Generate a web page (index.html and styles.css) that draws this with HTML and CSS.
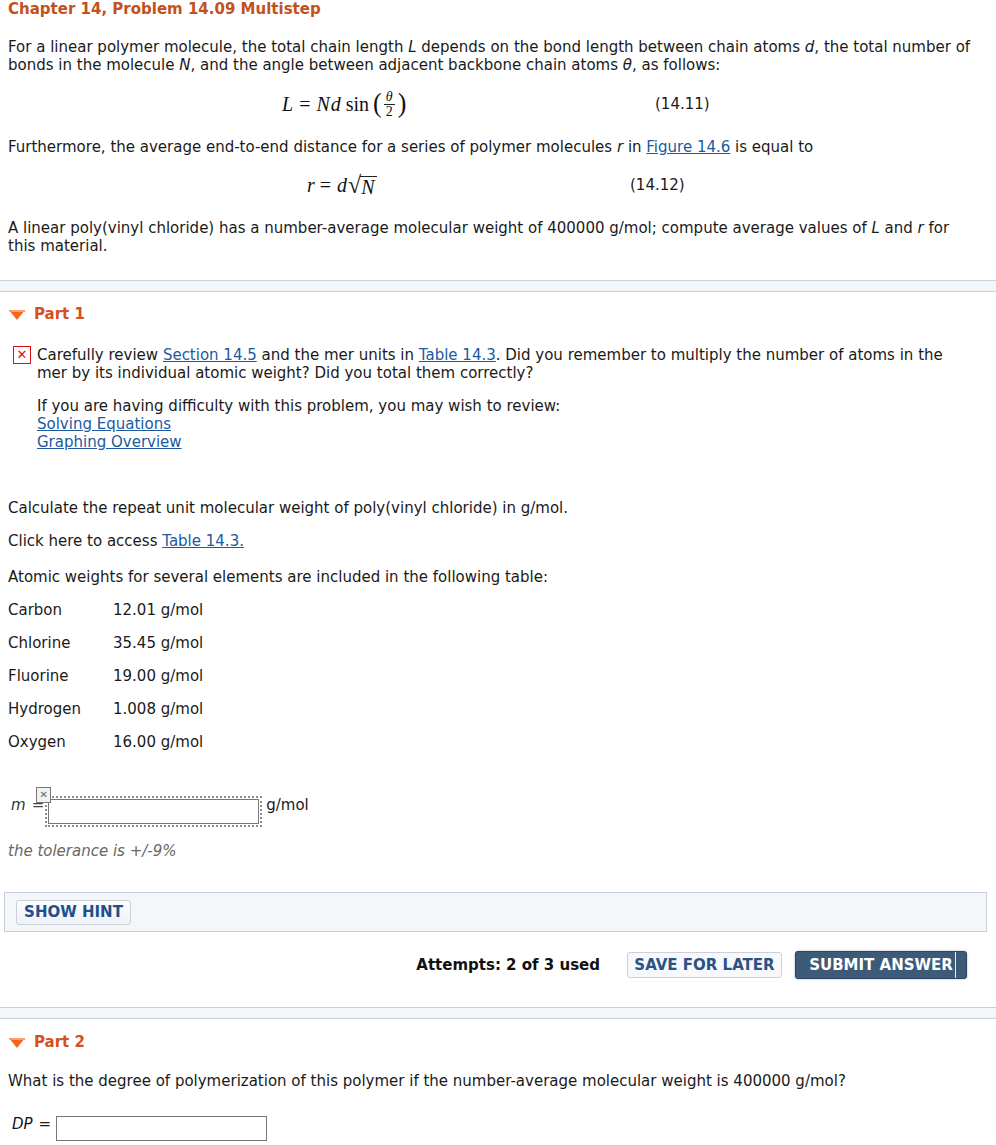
FILE: index.html
```html
<!DOCTYPE html>
<html>
<head>
<meta charset="utf-8">
<link rel="stylesheet" href="styles.css">
</head>
<body>
<div class="intro">
  <h1 class="title">Chapter 14, Problem 14.09 Multistep</h1>
  <p class="para">For a linear polymer molecule, the total chain length <i>L</i> depends on the bond length between chain atoms <i>d</i>, the total number of bonds in the molecule <i>N</i>, and the angle between adjacent backbone chain atoms <i>θ</i>, as follows:</p>
  <div class="eq eq1">
    <span class="math"><span class="mi l">L</span><span class="mo">=</span><span class="mi n">N</span><span class="mi">d</span><span class="fn">sin</span><span class="paren">(</span><span class="frac"><span class="num">θ</span><span class="den">2</span></span><span class="paren">)</span></span>
    <span class="eqnum">(14.11)</span>
  </div>
  <p class="para after-eq">Furthermore, the average end-to-end distance for a series of polymer molecules <i>r</i> in <a href="#">Figure 14.6</a> is equal to</p>
  <div class="eq eq2">
    <span class="math"><span class="mi r">r</span><span class="mo">=</span><span class="mi">d</span><span class="sqrt"><span class="rad">√</span><span class="radicand">N</span></span></span>
    <span class="eqnum">(14.12)</span>
  </div>
  <p class="para after-eq">A linear poly(vinyl chloride) has a number-average molecular weight of 400000 g/mol; compute average values of <i>L</i> and <i>r</i> for this material.</p>
</div>

<div class="sep sep1"></div>

<section class="part">
  <div class="part-head"><span class="tri"></span><span>Part 1</span></div>
  <div class="feedback">
    <span class="xicon">✕</span>
    <div class="fb-text">
      <p>Carefully review <a href="#">Section 14.5</a> and the mer units in <a href="#">Table 14.3</a>. Did you remember to multiply the number of atoms in the mer by its individual atomic weight? Did you total them correctly?</p>
      <p class="review">If you are having difficulty with this problem, you may wish to review:<br><a href="#">Solving Equations</a><br><a href="#">Graphing Overview</a></p>
    </div>
  </div>

  <p class="q q-first">Calculate the repeat unit molecular weight of poly(vinyl chloride) in g/mol.</p>
  <p class="q">Click here to access <a href="#">Table 14.3.</a></p>
  <p class="q q-atomic">Atomic weights for several elements are included in the following table:</p>
  <div class="weights">
    <span>Carbon</span><span>12.01 g/mol</span>
    <span>Chlorine</span><span>35.45 g/mol</span>
    <span>Fluorine</span><span>19.00 g/mol</span>
    <span>Hydrogen</span><span>1.008 g/mol</span>
    <span>Oxygen</span><span>16.00 g/mol</span>
  </div>

  <div class="answer">
    <span class="var">m</span><span class="eqs">=</span>
    <span class="field-wrap"><span class="mini-x">✕</span><span class="field"></span></span>
    <span class="unit">g/mol</span>
  </div>
  <p class="tol">the tolerance is +/-9%</p>

  <div class="hintbar"><button class="hint">SHOW HINT</button></div>

  <div class="actions">
    <span class="attempts">Attempts: 2 of 3 used</span>
    <button class="save">SAVE FOR LATER</button>
    <button class="submit">SUBMIT ANSWER</button>
  </div>
</section>

<div class="sep sep2"></div>

<section class="part">
  <div class="part-head part2-head"><span class="tri"></span><span>Part 2</span></div>
  <p class="q q-p2">What is the degree of polymerization of this polymer if the number-average molecular weight is 400000 g/mol?</p>
  <div class="answer2">
    <span class="var">DP</span><span class="eqs">=</span>
    <span class="field2"></span>
  </div>
</section>
</body>
</html>
```
FILE: styles.css
```css
html, body { margin: 0; padding: 0; background: #fff; }
body {
  font-family: "DejaVu Sans", Verdana, sans-serif;
  font-size: 15px;
  color: #1a1a1a;
  line-height: 18px;
  width: 996px;
}
a { color: #1b5aa0; text-decoration: underline; }
p { margin: 0; }

.intro { padding: 0 18px 0 8px; }
.title {
  margin: 0;
  font-size: 15px;
  line-height: 18px;
  font-weight: bold;
  color: #c4501c;
}
.para { margin-top: 20px; }
.para.after-eq { margin-top: 14px; }

.eq {
  display: grid;
  align-items: center;
  height: 40px;
  margin-top: 10px;
}
.eq1 { grid-template-columns: 373px auto; padding-left: 274px; }
.eq2 { grid-template-columns: 323px auto; padding-left: 299px; margin-top: 9px; }

.math {
  font-family: "Liberation Serif", "Times New Roman", serif;
  font-size: 20px;
  color: #111;
  display: inline-flex;
  align-items: center;
  line-height: 1;
}
.mi { font-style: italic; }
.mi.l { margin-right: 6px; }
.mi.r { margin-right: 5px; }
.mo { margin-right: 6px; }
.mi.n { margin-right: 1px; }
.fn { margin: 0 4px 0 5px; }
.paren { font-size: 26px; transform: scaleY(1.05); }
.frac {
  display: inline-flex; flex-direction: column; align-items: center;
  font-size: 14px; line-height: 12px; margin: 0 3px 0 2px;
}
.frac .num { font-style: italic; border-bottom: 1px solid #222; padding: 0 2px 1px; }
.frac .den { padding-top: 1px; }
.sqrt { display: inline-flex; align-items: flex-end; margin-left: 1px; }
.rad { font-size: 24px; line-height: 24px; }
.radicand { font-style: italic; border-top: 1px solid #222; line-height: 20px; padding: 0 2px 0 1px; margin-left: -1px; }
.eqnum { font-size: 15px; }

.sep {
  height: 10px;
  background: #f4f7fa;
  border-top: 1px solid #c8d0dc;
  border-bottom: 1px solid #c8d0dc;
}
.sep1 { margin-top: 25px; }
.sep2 { margin-top: 28px; }

.part { padding: 0 8px; }
.part-head {
  display: flex;
  align-items: center;
  gap: 9px;
  margin-top: 13px;
  font-family: "DejaVu Sans", Verdana, sans-serif;
  font-size: 15px;
  font-weight: bold;
  color: #d6501c;
}
.part2-head { margin-top: 14px; }
.tri {
  width: 0; height: 0;
  border-left: 8px solid transparent;
  border-right: 8px solid transparent;
  border-top: 10px solid #f4661a;
  margin-left: 1px;
  margin-top: 1px;
  position: relative;
}
.tri::before {
  content: "";
  position: absolute;
  left: -8px; top: -10px;
  width: 16px; height: 2px;
  background: #f8a070;
}

.feedback { display: flex; gap: 6px; margin-top: 23px; margin-left: 5px; }
.fb-text { padding-right: 14px; }
.xicon {
  flex: none;
  width: 16px; height: 16px;
  border: 1px solid #e01010;
  color: #e01010;
  font-weight: bold;
  font-size: 13px;
  line-height: 16px;
  text-align: center;
}
.review { margin-top: 15px; }

.q { margin-top: 15px; }
.q.q-first { margin-top: 48px; }
.q.q-atomic { margin-top: 18px; }
.q.q-p2 { margin-top: 21px; }

.weights {
  display: grid;
  grid-template-columns: 105px auto;
  row-gap: 15px;
  margin-top: 15px;
  width: 300px;
}

.answer {
  display: flex;
  align-items: flex-start;
  margin-top: 45px;
}
.var { font-style: italic; color: #333; margin-left: 2px; }
.answer .var { margin-left: 3px; }
.answer .eqs { margin-left: 6px; color: #444; }
.field-wrap {
  position: relative;
  border: 2px dotted #8a8a8a;
  padding: 1px;
  margin-left: 1px;
}
.mini-x {
  position: absolute;
  left: -11px; top: -11px;
  width: 13px; height: 14px;
  border: 1px solid #777;
  background: #f2f2f2;
  color: #666;
  font-size: 10px; line-height: 14px;
  text-align: center;
  font-weight: bold;
}
.field {
  display: block;
  width: 209px; height: 23px;
  border: 1px solid #777;
  background: #fff;
}
.unit { margin-left: 4px; }
.tol { font-style: italic; color: #6a6762; margin-top: 15px; }

.hintbar {
  margin: 32px 1px 0 -4px;
  height: 38px;
  background: #f4f7fa;
  border: 1px solid #c8cfdc;
  display: flex; align-items: center;
}
button {
  font-family: "DejaVu Sans", Verdana, sans-serif;
  font-weight: bold;
  font-size: 15px;
  cursor: pointer;
  padding: 0;
}
.hint {
  margin-left: 11px;
  height: 25px;
  width: 115px;
  color: #1f4f8c;
  background: linear-gradient(#fbfcfd, #eef1f5);
  border: 1px solid #c9d0dc;
  border-radius: 3px;
}

.actions {
  display: flex;
  justify-content: flex-end;
  align-items: center;
  margin-top: 19px;
  padding-right: 21px;
  height: 28px;
}
.attempts { font-weight: bold; margin-right: 27px; color: #111; }
.save {
  height: 26px;
  width: 155px;
  color: #2a5284;
  background: #f6f8fb;
  border: 1px solid #c9d0dc;
  border-radius: 3px;
  margin-right: 13px;
}
.submit {
  position: relative;
  height: 28px;
  width: 172px;
  color: #fff;
  background: #3d5a78;
  border: 1px solid #2c4560;
  border-radius: 3px;
  box-shadow: 0 0 2px #8aa0b8;
}
.submit::after {
  content: "";
  position: absolute;
  right: 10px; top: 0; bottom: 0;
  width: 1px;
  background: #e8eef5;
}

.answer2 {
  display: flex; align-items: flex-start; margin-top: 26px;
}
.answer2 .var { margin-left: 4px; margin-top: -1px; color: #111; }
.answer2 .eqs { margin: -1px 5px 0 6px; }
.field2 {
  width: 209px; height: 23px;
  border: 1px solid #777;
}
```
